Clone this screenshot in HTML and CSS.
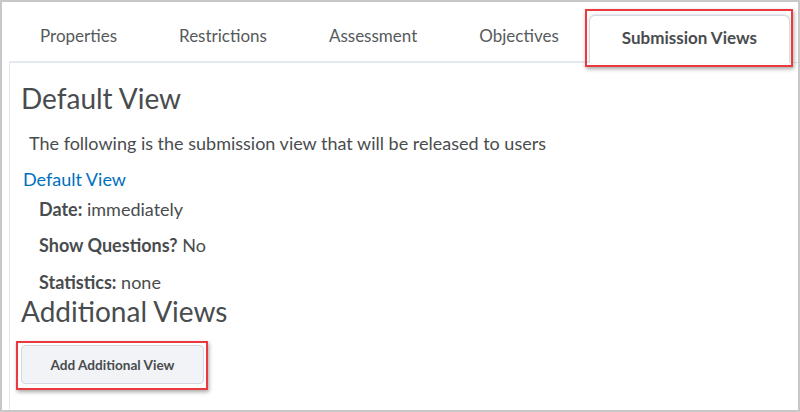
FILE: index.html
```html
<!DOCTYPE html>
<html lang="en">
<head>
<meta charset="utf-8">
<title>Submission Views</title>
<link rel="stylesheet" href="styles.css">
</head>
<body>
<div class="frame">
  <div class="tabs">
    <div class="tab">Properties</div>
    <div class="tab">Restrictions</div>
    <div class="tab">Assessment</div>
    <div class="tab">Objectives</div>
    <div class="tab tab-active"><span class="callout callout-tab"></span>Submission Views</div>
  </div>
  <div class="panel">
    <h1 class="heading">Default View</h1>
    <p class="intro">The following is the submission view that will be released to users</p>
    <a class="view-link" href="#">Default View</a>
    <div class="item item-date"><b>Date:</b> immediately</div>
    <div class="item item-show"><b>Show Questions?</b> No</div>
    <div class="item item-stats"><b>Statistics:</b> none</div>
    <h2 class="heading heading-2">Additional Views</h2>
    <div class="btn-wrap">
      <span class="callout callout-btn"></span>
      <button class="btn" type="button">Add Additional View</button>
    </div>
  </div>
</div>
</body>
</html>
```
FILE: styles.css
```css
html, body {
  margin: 0;
  padding: 0;
  background: #ffffff;
}
body {
  font-family: Lato, "Noto Sans", sans-serif;
  color: #494c4e;
}
.frame {
  width: 800px;
  height: 412px;
  box-sizing: border-box;
  border: 2px solid #c8c8c8;
  background: #fff;
  display: flex;
  flex-direction: column;
  overflow: hidden;
}
.tabs {
  display: flex;
  align-items: flex-end;
  padding: 12px 0 0 7px;
  height: 60px;
  box-sizing: border-box;
}
.tab {
  position: relative;
  padding: 0 31px;
  height: 48px;
  line-height: 44px;
  box-sizing: border-box;
  font-size: 17px;
  color: #565a5c;
  border-bottom: 1px solid #e3e9f1;
  margin-right: 0;
  white-space: nowrap;
}
.tab:nth-child(4) {
  padding-right: 30px;
}
.tab-active {
  padding: 0 32px;
  font-weight: 700;
  color: #494c4e;
  background: #fff;
  border: 1px solid #d3d9e3;
  border-bottom: 1px solid #fff;
  border-radius: 6px 6px 0 0;
  box-shadow: 0 -1px 3px rgba(0,0,0,0.12);
  height: 48px;
  margin-bottom: -1px;
  z-index: 1;
}
.callout {
  position: absolute;
  border: 2px solid #ea3a3f;
  box-shadow: 1px 2px 4px rgba(0,0,0,0.35);
  pointer-events: none;
}
.callout-tab {
  left: -5px;
  right: -4px;
  top: -7px;
  bottom: -5px;
}
.panel {
  flex: 1;
  margin-left: 7px;
  border-left: 1px solid #e3e9f1;
  border-top: 1px solid #e3e9f1;
  padding: 0 0 0 11px;
}
.heading {
  margin: 18px 0 0;
  font-size: 28px;
  font-weight: 400;
  line-height: 34px;
  color: #494c4e;
}
.heading-2 {
  margin-top: 2px;
  line-height: 30px;
}
.intro {
  margin: 16px 0 0 8px;
  font-size: 18px;
  line-height: 24px;
}
.view-link {
  display: block;
  margin: 12px 0 0 2px;
  font-size: 18px;
  line-height: 24px;
  color: #006fbf;
  text-decoration: none;
}
.item {
  margin: 6px 0 0 18px;
  font-size: 18px;
  line-height: 24px;
}
.item-show {
  margin-top: 12px;
}
.item-stats {
  margin-top: 13px;
}
.item b {
  font-weight: 700;
}
.btn-wrap {
  position: relative;
  display: inline-block;
  margin: 19px 0 0 0;
}
.btn {
  display: block;
  width: 183px;
  height: 39px;
  border: 1px solid #d3d9e3;
  border-radius: 4px;
  background: #f1f3f6;
  font-family: Lato, "Noto Sans", sans-serif;
  font-weight: 700;
  font-size: 13.6px;
  color: #494c4e;
  padding: 0;
}
.callout-btn {
  left: -5px;
  right: -4px;
  top: -4px;
  bottom: -6px;
}
```
